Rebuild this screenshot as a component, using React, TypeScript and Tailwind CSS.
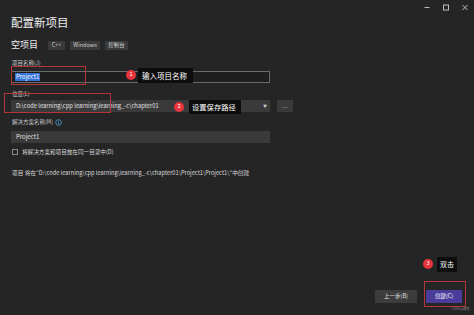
import React from "react";

const font = { fontFamily: '"Noto Sans CJK SC", "Noto Sans", sans-serif' };

export default function App() {
  return (
    <div
      className="relative w-[474px] h-[315px] bg-[#252526] text-[#e4e4e4] overflow-hidden flex flex-col pl-[11px]"
      style={font}
    >
      {/* window controls */}
      <div className="absolute top-[4px] left-[423px] flex items-center gap-[11px] text-[#bdbdbd]">
        <svg width="8" height="7" viewBox="0 0 8 7"><line x1="1.5" y1="3.5" x2="6.5" y2="3.5" stroke="currentColor" strokeWidth="1" /></svg>
        <svg width="8" height="7" viewBox="0 0 8 7"><rect x="1.5" y="1" width="5" height="5" fill="none" stroke="currentColor" strokeWidth="1" /></svg>
        <svg width="8" height="7" viewBox="0 0 8 7"><path d="M1.5 1 L6.5 6 M6.5 1 L1.5 6" stroke="currentColor" strokeWidth="1" /></svg>
      </div>

      <div className="mt-[15px] text-[11.5px] leading-[14px] text-[#f0f0f0]">配置新项目</div>

      <div className="mt-[11px] flex items-center h-[10px]">
        <span className="text-[9px] leading-[10px] mr-[10px] text-[#ececec]">空项目</span>
        <span className="bg-[#3a3a3a] text-[5.5px] leading-[9px] h-[9px] w-[17px] text-center text-[#cfcfcf] mr-[5px]">C++</span>
        <span className="bg-[#3a3a3a] text-[5.5px] leading-[9px] h-[9px] w-[30px] text-center text-[#cfcfcf] mr-[5px]">Windows</span>
        <span className="bg-[#3a3a3a] text-[5.5px] leading-[9px] h-[9px] w-[23px] text-center text-[#cfcfcf]">控制台</span>
      </div>

      <div className="mt-[10px] text-[5.5px] leading-[6px] pl-[1px] text-[#cccccc]">项目名称(J)</div>
      <div className="mt-[5px] w-[259px] h-[12px] border border-[#6a6a6a] bg-[#1f1f1f] flex items-center pl-[3px]">
        <span className="bg-[#3372d6] text-white text-[6px] leading-[8px] px-[1px]">Project1</span>
      </div>

      <div className="mt-[8px] text-[5.5px] leading-[6px] pl-[1px] text-[#cccccc]">位置(L)</div>
      <div className="mt-[3px] flex items-center gap-[7px]">
        <div className="w-[259px] h-[12px] bg-[#3a3a3a] flex items-center justify-between pl-[5px] pr-[3px]">
          <span className="text-[5.8px] leading-[8px] text-[#e0e0e0]">D:\code learning\cpp learning\learning_-c\chapter01</span>
          <span className="text-[4px] text-[#cfcfcf]">▼</span>
        </div>
        <div className="w-[16px] h-[12px] bg-[#3a3a3a] flex items-center justify-center text-[5px] leading-none text-[#bbbbbb]">…</div>
      </div>

      <div className="mt-[7px] flex items-center gap-[2px] pl-[1px] h-[6px]">
        <span className="text-[5.5px] leading-[6px] text-[#cccccc]">解决方案名称(M)</span>
        <svg width="7" height="7" viewBox="0 0 8 8">
          <circle cx="4" cy="4" r="3.2" fill="none" stroke="#4aa3df" strokeWidth="0.9" />
          <line x1="4" y1="3.5" x2="4" y2="6" stroke="#4aa3df" strokeWidth="0.9" />
          <circle cx="4" cy="2.2" r="0.55" fill="#4aa3df" />
        </svg>
      </div>
      <div className="mt-[6px] w-[259px] h-[12px] bg-[#3a3a3a] flex items-center pl-[5px]">
        <span className="text-[6px] leading-[8px] text-[#e0e0e0]">Project1</span>
      </div>

      <div className="mt-[6px] flex items-center gap-[4px] pl-[1px] h-[6px]">
        <div className="w-[6px] h-[6px] border border-[#8a8a8a]" />
        <span className="text-[5.6px] leading-[6px] text-[#d8d8d8]">将解决方案和项目放在同一目录中(D)</span>
      </div>

      <div className="mt-[15px] text-[5.7px] leading-[6px] pl-[1px] text-[#d8d8d8] whitespace-nowrap">
        项目 将在"D:\code learning\cpp learning\learning_-c\chapter01\Project1\Project1\"中创建
      </div>

      <div className="mt-auto mb-[12px] flex justify-end gap-[9px] pr-[12px]">
        <div className="w-[42px] h-[13px] bg-[#3c3c3c] flex items-center justify-center text-[5.5px] text-[#e0e0e0]">上一步(B)</div>
        <div className="w-[36px] h-[13px] bg-[#4b3c9c] flex items-center justify-center text-[5.5px] text-white">创建(C)</div>
      </div>

      <div className="absolute left-[452px] top-[307px] text-[3px] leading-[4px] text-[#888]">CSDN @编程</div>

      {/* annotations: red boxes */}
      <div className="absolute left-[11px] top-[66px] w-[75px] h-[19px] border border-[#b5343a]" />
      <div className="absolute left-[4px] top-[93px] w-[107px] h-[20px] border border-[#b5343a]" />
      <div className="absolute left-[424px] top-[281px] w-[42px] h-[26px] border border-[#b5343a]" />

      {/* badges */}
      <div className="absolute left-[126px] top-[70px] w-[10px] h-[10px] rounded-full bg-[#e8343c] flex items-center justify-center text-white text-[5.5px] leading-none">1</div>
      <div className="absolute left-[174px] top-[102px] w-[10px] h-[10px] rounded-full bg-[#e8343c] flex items-center justify-center text-white text-[5.5px] leading-none">2</div>
      <div className="absolute left-[423px] top-[259px] w-[10px] h-[10px] rounded-full bg-[#e8343c] flex items-center justify-center text-white text-[5.5px] leading-none">3</div>

      {/* callouts */}
      <div className="absolute left-[138px] top-[68px] w-[55px] h-[15px] bg-[#0d0d0d] flex items-center pl-[4px] text-white text-[7.5px] whitespace-nowrap">输入项目名称</div>
      <div className="absolute left-[189px] top-[100px] w-[52px] h-[14px] bg-[#0d0d0d] flex items-center pl-[3px] text-white text-[7.3px] whitespace-nowrap">设置保存路径</div>
      <div className="absolute left-[437px] top-[257px] w-[20px] h-[15px] bg-[#0d0d0d] flex items-center pl-[3px] text-white text-[7px] whitespace-nowrap">双击</div>
    </div>
  );
}
